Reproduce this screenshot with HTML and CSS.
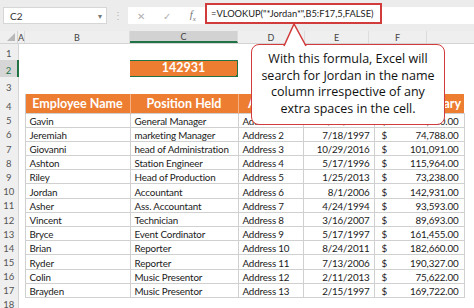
FILE: index.html
```html
<!DOCTYPE html>
<html lang="en">

<head>
  <meta charset="UTF-8">
  <meta name="viewport" content="width=device-width, initial-scale=1.0">
  <title>VLOOKUP with wildcard</title>
  <link rel="stylesheet" href="styles.css">
</head>

<body>
  <div class="toolbar">
    <div class="namebox"><span>C2</span><span class="caret">&#9662;</span></div>
    <span class="grip">&#8942;</span>
    <div class="fbtns"><span>&#10005;</span><span>&#10003;</span><span class="fx">f<sub>x</sub></span></div>
    <div class="formula">=VLOOKUP("*Jordan*",B5:F17,5,FALSE)</div>
    <div class="filler"></div>
  </div>

  <div class="colheads">
    <div class="corner"><i></i></div>
    <div class="ch col-a">A</div>
    <div class="ch col-b">B</div>
    <div class="ch col-c active">C</div>
    <div class="ch col-d">D</div>
    <div class="ch col-e">E</div>
    <div class="ch col-f">F</div>
    <div class="ch col-g"></div>
  </div>

  <table class="sheet">
    <colgroup>
      <col class="w-rn"><col class="w-a"><col class="w-b"><col class="w-c"><col class="w-d"><col class="w-e"><col class="w-f"><col>
    </colgroup>
    <tr class="r1"><td class="rn">1</td><td></td><td></td><td></td><td></td><td></td><td></td><td></td></tr>
    <tr class="r2"><td class="rn active">2</td><td></td><td></td>
      <td class="pick"><div class="result">142931<i class="handle"></i></div></td>
      <td></td><td></td><td></td><td></td></tr>
    <tr class="r3"><td class="rn">3</td><td></td><td></td><td></td><td></td><td></td><td></td><td></td></tr>
    <tr class="head"><td class="rn">4</td><td></td>
      <th>Employee Name</th><th>Position Held</th><th>Address</th><th>Joining Date</th><th class="sal">Salary</th><td></td></tr>
    <tr class="row"><td class="rn">5</td><td></td><td class="c">Gavin</td><td class="c">General Manager</td><td class="c">Address 1</td><td class="c num">3/12/2004</td><td class="c"><div class="money"><span>$</span><span>98,410.00</span></div></td><td></td></tr>
    <tr class="row"><td class="rn">6</td><td></td><td class="c">Jeremiah</td><td class="c">marketing Manager</td><td class="c">Address 2</td><td class="c num">7/18/1997</td><td class="c"><div class="money"><span>$</span><span>74,788.00</span></div></td><td></td></tr>
    <tr class="row"><td class="rn">7</td><td></td><td class="c">Giovanni</td><td class="c">head of Administration</td><td class="c">Address 3</td><td class="c num">10/29/2016</td><td class="c"><div class="money"><span>$</span><span>101,091.00</span></div></td><td></td></tr>
    <tr class="row"><td class="rn">8</td><td></td><td class="c">Ashton</td><td class="c">Station Engineer</td><td class="c">Address 4</td><td class="c num">5/17/1996</td><td class="c"><div class="money"><span>$</span><span>115,964.00</span></div></td><td></td></tr>
    <tr class="row"><td class="rn">9</td><td></td><td class="c">Riley</td><td class="c">Head of Production</td><td class="c">Address 5</td><td class="c num">1/25/2013</td><td class="c"><div class="money"><span>$</span><span>73,238.00</span></div></td><td></td></tr>
    <tr class="row"><td class="rn">10</td><td></td><td class="c">Jordan</td><td class="c">Accountant</td><td class="c">Address 6</td><td class="c num">8/1/2006</td><td class="c"><div class="money"><span>$</span><span>142,931.00</span></div></td><td></td></tr>
    <tr class="row"><td class="rn">11</td><td></td><td class="c">Asher</td><td class="c">Ass. Accountant</td><td class="c">Address 7</td><td class="c num">4/24/1994</td><td class="c"><div class="money"><span>$</span><span>93,593.00</span></div></td><td></td></tr>
    <tr class="row"><td class="rn">12</td><td></td><td class="c">Vincent</td><td class="c">Technician</td><td class="c">Address 8</td><td class="c num">3/16/2007</td><td class="c"><div class="money"><span>$</span><span>89,693.00</span></div></td><td></td></tr>
    <tr class="row"><td class="rn">13</td><td></td><td class="c">Bryce</td><td class="c">Event Cordinator</td><td class="c">Address 9</td><td class="c num">5/17/1997</td><td class="c"><div class="money"><span>$</span><span>161,455.00</span></div></td><td></td></tr>
    <tr class="row"><td class="rn">14</td><td></td><td class="c">Brian</td><td class="c">Reporter</td><td class="c">Address 10</td><td class="c num">8/24/2011</td><td class="c"><div class="money"><span>$</span><span>182,660.00</span></div></td><td></td></tr>
    <tr class="row"><td class="rn">15</td><td></td><td class="c">Ryder</td><td class="c">Reporter</td><td class="c">Address 11</td><td class="c num">7/13/2006</td><td class="c"><div class="money"><span>$</span><span>190,327.00</span></div></td><td></td></tr>
    <tr class="row"><td class="rn">16</td><td></td><td class="c">Colin</td><td class="c">Music Presentor</td><td class="c">Address 12</td><td class="c num">2/11/2013</td><td class="c"><div class="money"><span>$</span><span>75,622.00</span></div></td><td></td></tr>
    <tr class="row"><td class="rn">17</td><td></td><td class="c">Brayden</td><td class="c">Music Presentor</td><td class="c">Address 13</td><td class="c num">2/15/1997</td><td class="c"><div class="money"><span>$</span><span>169,722.00</span></div></td><td></td></tr>
    <tr class="r18"><td class="rn">18</td><td></td><td></td><td></td><td></td><td></td><td></td><td></td></tr>
  </table>

  <!-- note pointing at the formula -->
  <svg class="tail" width="26" height="26" viewBox="0 0 26 26">
    <polygon points="11,2 1,25 23,25" fill="#fff" />
    <polyline points="1,24 11,2 23,24" fill="none" stroke="#d23b3b" stroke-width="1.5" />
  </svg>
  <div class="callout">
    With this formula, Excel will<br>
    search for Jordan in the name<br>
    column irrespective of any<br>
    extra spaces in the cell.
  </div>
</body>

</html>
```

FILE: styles.css
```css
* {
  box-sizing: border-box;
}

body {
  margin: 0;
  width: 474px;
  height: 308px;
  overflow: hidden;
  background: #fff;
  font-family: "Lato", "Liberation Sans", sans-serif;
  color: #222;
  position: relative;
}

/* ---------- formula bar ---------- */
.toolbar {
  display: flex;
  align-items: flex-end;
  height: 31px;
  padding: 3px 0 7px 3px;
  background: #ececec;
}

.namebox {
  display: flex;
  align-items: center;
  justify-content: space-between;
  width: 104px;
  height: 17px;
  padding: 0 4px 0 6px;
  background: #fff;
  border: 1px solid #d6d6d6;
  font-size: 10px;
  color: #333;
}

.namebox .caret {
  font-size: 8px;
  color: #777;
}

.grip {
  width: 21px;
  text-align: center;
  color: #b5b5b5;
  font-size: 10px;
  line-height: 17px;
}

.fbtns {
  display: flex;
  align-items: center;
  justify-content: space-around;
  width: 77px;
  height: 17px;
  background: #fff;
  color: #b0b0b0;
  font-size: 10px;
}

.fbtns .fx {
  font-family: "Liberation Serif", serif;
  font-style: italic;
  color: #777;
  font-size: 11px;
}

.fbtns .fx sub {
  font-size: 7px;
}

.formula {
  width: 177px;
  height: 21px;
  padding: 0 0 0 4px;
  border: 2px solid #d23b3b;
  background: #fff;
  font-size: 9.3px;
  line-height: 17px;
  color: #222;
  white-space: nowrap;
}

.filler {
  flex: 1;
  height: 17px;
  background: #fff;
}

/* ---------- column letters ---------- */
.colheads {
  display: flex;
  height: 13px;
  background: #efefef;
  border-bottom: 1px solid #d4d4d4;
  font-size: 9px;
  color: #444;
}

.corner {
  position: relative;
  width: 18px;
  border-right: 1px solid #d4d4d4;
}

.corner i {
  position: absolute;
  right: 2px;
  bottom: 2px;
  width: 0;
  height: 0;
  border-left: 8px solid transparent;
  border-bottom: 8px solid #b8b8b8;
}

.ch {
  display: flex;
  align-items: center;
  justify-content: center;
  border-right: 1px solid #dcdcdc;
}

.ch.active {
  background: #d2d2d2;
  border-bottom: 2px solid #217346;
}

.col-a { width: 7px; }
.col-b { width: 105px; }
.col-c { width: 108px; }
.col-d { width: 67px; }
.col-e { width: 64px; }
.col-f { width: 58px; }
.col-g { flex: 1; border-right: none; }

/* ---------- sheet ---------- */
.sheet {
  width: 474px;
  table-layout: fixed;
  border-collapse: collapse;
  font-family: "Lato", sans-serif;
  font-size: 9.8px;
  letter-spacing: -0.15px;
}

.w-rn { width: 18px; }
.w-a { width: 7px; }
.w-b { width: 105px; }
.w-c { width: 108px; }
.w-d { width: 65px; }
.w-e { width: 71px; }
.w-f { width: 90px; }

.sheet td,
.sheet th {
  padding: 0;
  white-space: nowrap;
  overflow: hidden;
}

.sheet .rn {
  background: #efefef;
  border-right: 1px solid #d4d4d4;
  color: #555;
  font-size: 9.5px;
  letter-spacing: 0;
  text-align: center;
  vertical-align: bottom;
  padding-bottom: 1px;
}

.sheet .rn.active {
  background: #d6d6d6;
  border-right: 2px solid #217346;
  color: #217346;
}

.r1 { height: 16px; }
.r2 { height: 17px; }
.r3 { height: 17px; }
.head { height: 19px; }
.row { height: 14.2px; }
.r18 { height: 14px; }

.pick {
  padding: 0 !important;
}

.result {
  position: relative;
  height: 17px;
  margin-left: -1px;
  background: #ed7d31;
  border: 1.5px solid #217346;
  color: #fff;
  font-weight: bold;
  font-size: 12.5px;
  letter-spacing: 0;
  line-height: 14px;
  text-align: center;
}

.result .handle {
  position: absolute;
  right: -3px;
  bottom: -3px;
  width: 4px;
  height: 4px;
  background: #217346;
}

.head th {
  background: #ed7d31;
  color: #fff;
  font-size: 12.5px;
  font-weight: bold;
  letter-spacing: 0;
  border-left: 1px solid #f4b183;
  text-align: center;
}

.head th:first-of-type {
  border-left: 1px solid #c9c9c9;
}

.head th.sal {
  text-align: right;
  padding-right: 3px;
}

.sheet .c {
  border: 1px solid #d0d0d0;
  padding-left: 4px;
  line-height: 12px;
  vertical-align: bottom;
  color: #1a1a1a;
}

.sheet .num {
  text-align: right;
  padding-right: 4px;
}

.money {
  display: flex;
  justify-content: space-between;
  padding: 0 5px 0 3px;
}

/* ---------- callout ---------- */
.callout {
  position: absolute;
  left: 251px;
  top: 44px;
  width: 194px;
  height: 81px;
  padding-top: 6px;
  background: #fff;
  border: 1.5px solid #d23b3b;
  border-radius: 8px;
  font-family: "Open Sans", "DejaVu Sans", sans-serif;
  font-size: 12.5px;
  line-height: 16.7px;
  text-align: center;
  color: #111;
  white-space: nowrap;
}

.tail {
  position: absolute;
  left: 283px;
  top: 22px;
  z-index: 2;
}
```
